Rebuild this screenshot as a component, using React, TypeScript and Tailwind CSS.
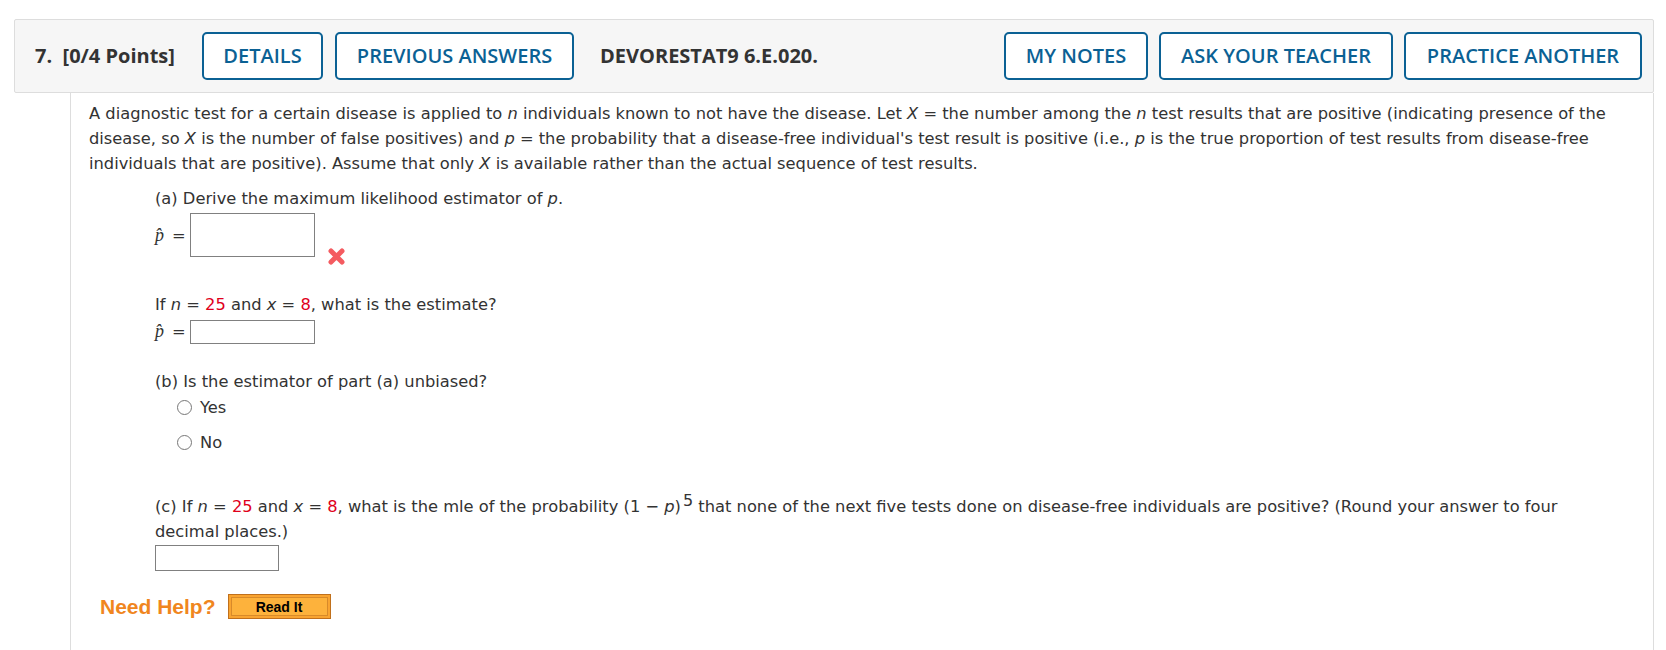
import { ReactNode } from "react"

const btn = "h-[48px] flex items-center justify-center border-2 border-[#0b6194] rounded-[5px] text-[#0b6194] text-[20px] font-semibold bg-white"

function V({ children }: { children: ReactNode }) {
    return <i className="italic">{children}</i>
}

function Red({ children }: { children: ReactNode }) {
    return <span className="text-[#e0001b]">{children}</span>
}

function PHat() {
    return <span className="inline-block [font-family:'Liberation_Serif',serif] italic text-[18px] w-[12px]">p̂</span>
}

function Radio({ label }: { label: string }) {
    return (
        <label className="flex items-center gap-[8px] h-[22px]">
            <span className="w-[15px] h-[15px] rounded-full border border-[#777] bg-white" />
            <span>{label}</span>
        </label>
    )
}

export default function App() {
    return (
        <div className="w-full h-[650px] bg-white pt-[19px] pl-[14px] pr-[12px] overflow-hidden [font-family:'DejaVu_Sans',sans-serif] text-[16.3px] text-[#333]">
            <div className="h-[74px] flex items-center border border-[#ddd] rounded-[2px] bg-[#f6f6f6] pl-[20px] pr-[11px] [font-family:'Open_Sans',sans-serif]">
                <p className="text-[20px] font-bold text-[#333] w-[167px] whitespace-nowrap">7.&nbsp; [0/4 Points]</p>
                <div className="flex items-center gap-[12px]">
                    <button className={`${btn} w-[121px]`}>DETAILS</button>
                    <button className={`${btn} w-[239px]`}>PREVIOUS ANSWERS</button>
                </div>
                <p className="ml-[26px] text-[20px] font-bold text-[#333]">DEVORESTAT9 6.E.020.</p>
                <div className="ml-auto flex items-center gap-[11px]">
                    <button className={`${btn} w-[144px]`}>MY NOTES</button>
                    <button className={`${btn} w-[234px]`}>ASK YOUR TEACHER</button>
                    <button className={`${btn} w-[238px]`}>PRACTICE ANOTHER</button>
                </div>
            </div>

            <div className="ml-[56px] h-[560px] border-l border-r border-[#ddd] pl-[18px] pr-[6px] pt-[8px] leading-[25px]">
                <p>
                    A diagnostic test for a certain disease is applied to <V>n</V> individuals known to not have the disease. Let <V>X</V> = the number among the <V>n</V> test results that are positive (indicating presence of the<br />
                    disease, so <V>X</V> is the number of false positives) and <V>p</V> = the probability that a disease-free individual's test result is positive (i.e., <V>p</V> is the true proportion of test results from disease-free<br />
                    individuals that are positive). Assume that only <V>X</V> is available rather than the actual sequence of test results.
                </p>

                <div className="pl-[66px] mt-[10px]">
                    <p>(a) Derive the maximum likelihood estimator of <V>p</V>.</p>
                    <div className="flex items-start h-[44px] mt-[2px]">
                        <div className="flex items-center h-[44px]">
                            <PHat />
                            <span className="ml-[5px] mr-[4px]">=</span>
                            <span className="w-[125px] h-[44px] border border-[#808080] bg-white" />
                        </div>
                        <svg className="ml-[13px] mt-[35px] shrink-0" width="17" height="17" viewBox="0 0 17 17">
                            <path d="M3 3 L14 14 M14 3 L3 14" stroke="#f45b60" strokeWidth="5" strokeLinecap="round" />
                        </svg>
                    </div>

                    <p className="mt-[35px]">If <V>n</V> = <Red>25</Red> and <V>x</V> = <Red>8</Red>, what is the estimate?</p>
                    <div className="flex items-center mt-[2px]">
                        <PHat />
                        <span className="ml-[5px] mr-[4px]">=</span>
                        <span className="w-[125px] h-[24px] border border-[#808080] bg-white" />
                    </div>

                    <p className="mt-[25px]">(b) Is the estimator of part (a) unbiased?</p>
                    <div className="pl-[22px] flex flex-col gap-[13px] mt-[2px]">
                        <Radio label="Yes" />
                        <Radio label="No" />
                    </div>

                    <p className="mt-[41px]">
                        (c) If <V>n</V> = <Red>25</Red> and <V>x</V> = <Red>8</Red>, what is the mle of the probability (1 − <V>p</V>)<sup className="text-[16px] -top-[6px] ml-[2px]">5</sup> that none of the next five tests done on disease-free individuals are positive? (Round your answer to four<br />
                        decimal places.)
                    </p>
                    <span className="block mt-[1px] w-[124px] h-[26px] border border-[#808080] bg-white" />
                </div>

                <div className="flex items-center mt-[23px] ml-[11px]">
                    <span className="[font-family:'Liberation_Sans',Arial,sans-serif] font-bold text-[21px] text-[#f0861e]">Need Help?</span>
                    <button className="ml-[12px] w-[103px] h-[25px] border border-[#c0701c] bg-[#f9a431] p-[2px]">
                        <span className="flex items-center justify-center w-full h-full border border-[#d88a2a] bg-[#fdb23c] [font-family:'Liberation_Sans',Arial,sans-serif] font-bold text-[14px] text-black leading-none">Read It</span>
                    </button>
                </div>
            </div>
        </div>
    )
}
